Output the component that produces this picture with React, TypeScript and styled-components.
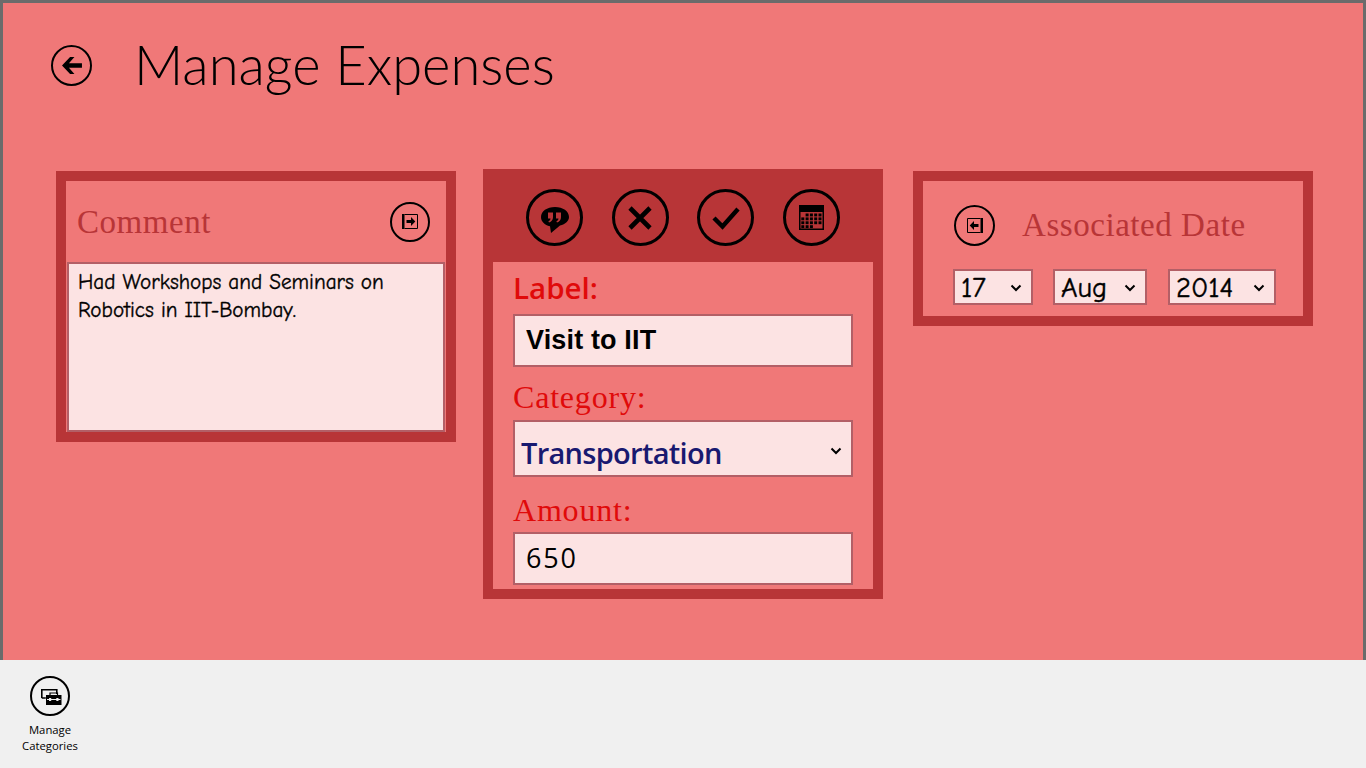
import React from "react";
import styled, { createGlobalStyle } from "styled-components";

const Global = createGlobalStyle`
  html, body { margin: 0; padding: 0; height: 100%; overflow: hidden; }
  #root { height: 100%; }
  * { box-sizing: border-box; }
`;

const SERIF = `"Liberation Serif", serif`;
const SEGOE = `"Open Sans", "Noto Sans", sans-serif`;
const COMIC = `"Comic Sans MS", "Comic Neue", cursive`;
const DARK = "#b83537";
const PINK = "#f07878";
const FIELD = "#fce3e3";
const EDGE = "#b35f66";

const Page = styled.div`
  width: 1366px;
  height: 768px;
  display: flex;
  flex-direction: column;
`;
const Screen = styled.main`
  height: 660px;
  background: ${PINK};
  border: 3px solid #6b6b6b;
  border-bottom: 0;
  padding: 0 0 0 48px;
`;
const Header = styled.header`
  height: 166px;
  display: flex;
  align-items: flex-start;
  padding-top: 29px;
  gap: 42px;
`;
const BackSlot = styled.div`
  margin-top: 13px;
`;
const Title = styled.h1`
  margin: 0;
  font: 300 54.300px/64px Lato, ${SEGOE};
  color: #000;
`;
const Columns = styled.div`
  display: flex;
  align-items: flex-start;
  padding-left: 5px;
`;
const Round = styled.button<{ $size: number; $stroke: number }>`
  flex: none;
  width: ${(p) => p.$size}px;
  height: ${(p) => p.$size}px;
  padding: 0;
  border: ${(p) => p.$stroke}px solid #000;
  border-radius: 50%;
  background: transparent;
  display: flex;
  align-items: center;
  justify-content: center;
`;
const Panel = styled.section<{ $top: number; $left: number; $height: number }>`
  width: 400px;
  height: ${(p) => p.$height}px;
  margin-top: ${(p) => p.$top}px;
  margin-left: ${(p) => p.$left}px;
  border: 10px solid ${DARK};
  display: flex;
  flex-direction: column;
`;
const CommentHead = styled.div`
  height: 81px;
  padding: 0 16px 0 11px;
  display: flex;
  align-items: center;
  justify-content: space-between;
`;
const PanelTitle = styled.h2`
  margin: 0;
  font: 400 33px/40px ${SERIF};
  letter-spacing: 0.55px;
  color: ${DARK};
`;
const CommentBox = styled.textarea`
  display: block;
  margin: 0 1px;
  width: 378px;
  height: 170px;
  padding: 4px 9px;
  border: 2px solid ${EDGE};
  border-radius: 0;
  background: ${FIELD};
  color: #000;
  font: 400 21.200px/28px ${COMIC};
  -webkit-text-stroke: 0.35px #000;
  resize: none;
  outline: none;
  overflow: hidden;
`;
const FormPanel = styled.section`
  width: 400px;
  height: 430px;
  margin-left: 27px;
  border: 10px solid ${DARK};
  border-top: 0;
  display: flex;
  flex-direction: column;
`;
const Actions = styled.div`
  height: 93px;
  background: ${DARK};
  margin: 0 -10px;
  padding-top: 20px;
  display: flex;
  justify-content: center;
  align-items: flex-start;
  gap: 28.67px;
`;
const FormBody = styled.div`
  flex: 1;
  padding: 0 20px;
`;
const FieldLabel = styled.label<{ $h: number }>`
  height: ${(p) => p.$h}px;
  display: flex;
  align-items: flex-end;
  color: #e00a0a;
`;
const LabelSans = styled(FieldLabel)`
  font: 600 29.500px/40px ${SEGOE};
  padding: 0 0 6px 0;
`;
const LabelSerif = styled(FieldLabel)<{ $pad: number }>`
  font: 400 32px/40px ${SERIF};
  letter-spacing: 0.8px;
  padding-bottom: ${(p) => p.$pad}px;
`;
const TextField = styled.input<{ $bold?: boolean }>`
  display: block;
  width: 340px;
  height: 53px;
  padding: ${(p) => (p.$bold ? "0 11px" : "0 11px 2px")};
  border: 2px solid ${EDGE};
  border-radius: 0;
  background: ${FIELD};
  color: #000;
  outline: none;
  font: ${(p) =>
    p.$bold ? `700 27px/40px "Liberation Sans", sans-serif` : `400 27px/40px ${SEGOE}`};
  letter-spacing: ${(p) => (p.$bold ? "0.15px" : "1.800px")};
`;
const SelectWrap = styled.div<{ $w: number; $h: number; $ml?: number }>`
  position: relative;
  width: ${(p) => p.$w}px;
  height: ${(p) => p.$h}px;
  margin-left: ${(p) => p.$ml ?? 0}px;
`;
const Select = styled.select<{ $navy?: boolean }>`
  appearance: none;
  display: block;
  width: 100%;
  height: 100%;
  border: 2px solid ${EDGE};
  border-radius: 0;
  background: ${FIELD};
  outline: none;
  opacity: 1;
  color: ${(p) => (p.$navy ? "#191970" : "#000")};
  padding: ${(p) => (p.$navy ? "9px 0 0 6px" : "1px 0 0 6px")};
  font: ${(p) => (p.$navy ? `600 29px/40px ${SEGOE}` : `400 28.500px/32px ${COMIC}`)};
  letter-spacing: ${(p) => (p.$navy ? "-0.7px" : "0")};
  -webkit-text-stroke: ${(p) => (p.$navy ? "0" : "0.4px #000")};
`;
const Chevron = styled.svg<{ $down: number }>`
  position: absolute;
  right: 11px;
  top: 50%;
  width: 12px;
  height: 8px;
  margin-top: ${(p) => p.$down - 4}px;
  pointer-events: none;
`;
const DateHead = styled.div`
  height: 88px;
  padding: 0 0 0 31px;
  display: flex;
  align-items: center;
  gap: 27px;
`;
const DateRow = styled.div`
  display: flex;
  padding-left: 30px;
`;
const AppBar = styled.footer`
  height: 108px;
  background: #f0f0f0;
  padding: 16px 0 0 10px;
`;
const AppButton = styled.div`
  width: 80px;
  display: flex;
  flex-direction: column;
  align-items: center;
`;
const AppLabel = styled.span`
  margin-top: 6px;
  width: 80px;
  text-align: center;
  font: 400 11.300px/16px ${SEGOE};
  color: #000;
`;

const Arrow = () => (
  <svg width="23" height="19" viewBox="0 0 24 20">
    <path d="M10.500 1 2 10l8.500 9h4.600L9.300 12.400H23V7.600H9.300L15.100 1z" fill="#000" />
  </svg>
);
const Collapse = ({ flip }: { flip?: boolean }) => (
  <svg width="16" height="15" viewBox="0 0 16 15" style={flip ? { transform: "scaleX(-1)" } : undefined}>
    <rect x="0" y="0" width="2.500" height="15" fill="#000" />
    <path d="M2.500.5h13v14h-13" fill="none" stroke="#000" />
    <path d="M4.500 6h4.500V3l4.300 4.500L9 12V9H4.500z" fill="#000" />
  </svg>
);
const Quote = () => (
  <svg width="28" height="30" viewBox="0 0 28 30">
    <path
      d="M14 4C6 4 0 8.300 0 14c0 4.500 3.500 8 9 9.300L10 30l9-7.400C24.500 21 28 18 28 14 28 8.300 22 4 14 4z"
      fill="#000"
    />
    <path
      d="M7 9.500h5v4.700c0 2.700-1.500 4.500-4 5.300l-.6-1.300c1.300-.6 2-1.500 2.100-2.800H7zM15 9.500h5v4.700c0 2.700-1.500 4.500-4 5.300l-.6-1.300c1.300-.6 2-1.500 2.100-2.800H15z"
      fill={DARK}
    />
  </svg>
);
const Cross = () => (
  <svg width="24" height="24" viewBox="0 0 24 24">
    <path d="M2 2l20 20M22 2L2 22" stroke="#000" strokeWidth="4.600" fill="none" />
  </svg>
);
const Check = () => (
  <svg width="28" height="24" viewBox="0 0 28 24">
    <path d="M2 12l8.500 8.500L26 3" stroke="#000" strokeWidth="4.400" fill="none" />
  </svg>
);
const CAL_ROWS = [
  [1, 2, 3, 4],
  [0, 1, 2, 3, 4],
  [0, 1, 2, 3, 4],
  [0, 1, 2],
];
const Calendar = () => (
  <svg width="25" height="25" viewBox="0 0 25 25">
    <rect x="0.750" y="0.750" width="23.500" height="23.500" fill="none" stroke="#000" strokeWidth="1.500" />
    <rect width="25" height="7" fill="#000" />
    {CAL_ROWS.map((row, r) =>
      row.map((c) => (
        <rect key={`${r}-${c}`} x={2.300 + c * 4.300} y={8.500 + r * 3.900} width="3" height="2.900" fill="#000" />
      ))
    )}
  </svg>
);
const Briefcases = () => (
  <svg width="24" height="20" viewBox="0 0 24 20">
    <path d="M3.800 12V3.800h15V8M3.800 12h4" fill="none" stroke="#000" strokeWidth="1.600" />
    <rect x="8" y="9" width="15.500" height="10" fill="#000" />
    <path d="M12 9V7h7.500v2" fill="none" stroke="#000" strokeWidth="1.200" />
    <path d="M9 13.500h13.500" stroke="#f0f0f0" strokeWidth="1" />
    <rect x="11" y="12" width="2.200" height="3" fill="#f0f0f0" />
    <rect x="18.300" y="12" width="2.200" height="3" fill="#f0f0f0" />
  </svg>
);
const Down = ({ down = 0 }: { down?: number }) => (
  <Chevron $down={down} viewBox="0 0 12 8">
    <path d="M1.500 1.500 6 6l4.500-4.500" fill="none" stroke="#000" strokeWidth="2" />
  </Chevron>
);

export default function App() {
  return (
    <Page>
      <Global />
      <Screen>
        <Header>
          <BackSlot>
            <Round $size={41} $stroke={2} type="button" aria-label="Back">
              <Arrow />
            </Round>
          </BackSlot>
          <Title>Manage Expenses</Title>
        </Header>
        <Columns>
          <Panel $top={2} $left={0} $height={271}>
            <CommentHead>
              <PanelTitle>Comment</PanelTitle>
              <Round $size={40} $stroke={2} type="button" aria-label="Collapse">
                <Collapse />
              </Round>
            </CommentHead>
            <CommentBox
              readOnly
              defaultValue="Had Workshops and Seminars on Robotics in IIT-Bombay."
            />
          </Panel>
          <FormPanel>
            <Actions>
              {[<Quote key="q" />, <Cross key="x" />, <Check key="c" />, <Calendar key="d" />].map((icon, i) => (
                <Round key={i} $size={57} $stroke={3} type="button">
                  {icon}
                </Round>
              ))}
            </Actions>
            <FormBody>
              <LabelSans $h={52}>Label:</LabelSans>
              <TextField $bold readOnly defaultValue="Visit to IIT" />
              <LabelSerif $h={53} $pad={3}>Category:</LabelSerif>
              <SelectWrap $w={340} $h={57}>
                <Select $navy defaultValue="Transportation">
                  <option>Transportation</option>
                </Select>
                <Down down={2} />
              </SelectWrap>
              <LabelSerif $h={55} $pad={2}>Amount:</LabelSerif>
              <TextField readOnly defaultValue="650" />
            </FormBody>
          </FormPanel>
          <Panel $top={2} $left={30} $height={155}>
            <DateHead>
              <Round $size={41} $stroke={2} type="button" aria-label="Expand">
                <Collapse flip />
              </Round>
              <PanelTitle>Associated Date</PanelTitle>
            </DateHead>
            <DateRow>
              <SelectWrap $w={80} $h={36}>
                <Select defaultValue="17"><option>17</option></Select>
                <Down down={1} />
              </SelectWrap>
              <SelectWrap $w={94} $h={36} $ml={20}>
                <Select defaultValue="Aug"><option>Aug</option></Select>
                <Down down={1} />
              </SelectWrap>
              <SelectWrap $w={108} $h={36} $ml={21}>
                <Select defaultValue="2014"><option>2014</option></Select>
                <Down down={1} />
              </SelectWrap>
            </DateRow>
          </Panel>
        </Columns>
      </Screen>
      <AppBar>
        <AppButton>
          <Round $size={40} $stroke={2} type="button" aria-label="Manage Categories">
            <Briefcases />
          </Round>
          <AppLabel>Manage Categories</AppLabel>
        </AppButton>
      </AppBar>
    </Page>
  );
}
